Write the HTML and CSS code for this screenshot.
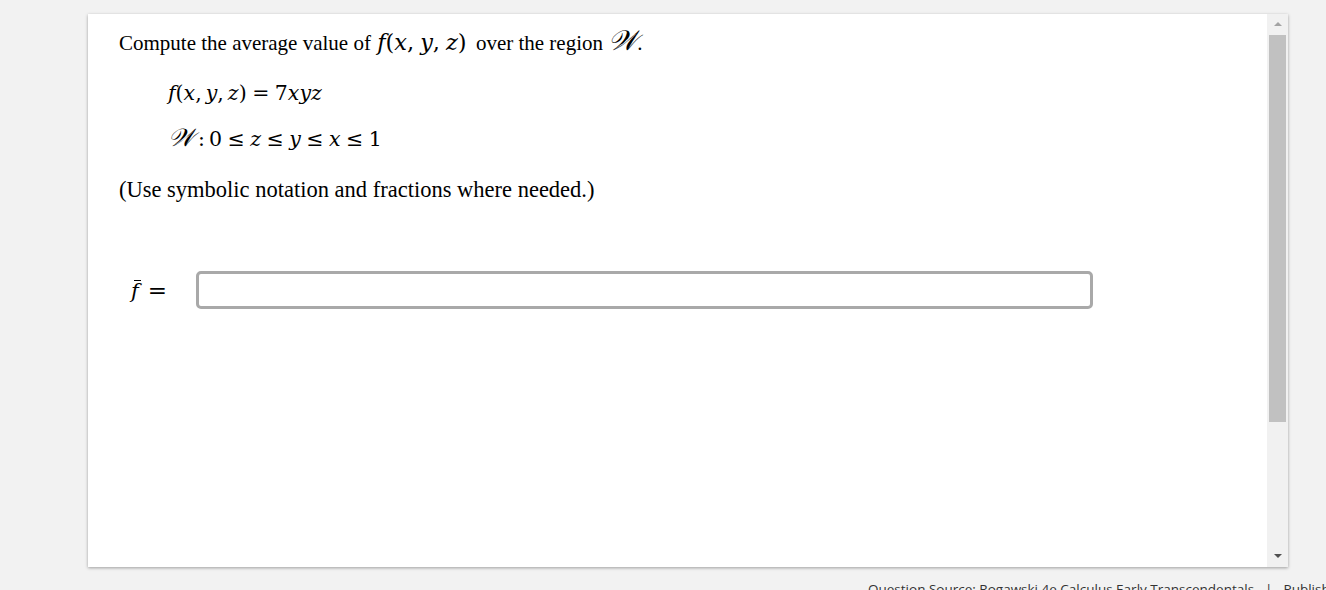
FILE: index.html
```html
<!DOCTYPE html>
<html>
<head>
<meta charset="utf-8">
<link rel="stylesheet" href="styles.css">
</head>
<body>
<div class="wrap">
  <div class="card">
    <div class="content">
      <p class="prompt">Compute the average value of <span class="m"><i>f</i>(<i>x</i>,<span class="sp"></span><i>y</i>,<span class="sp"></span><i>z</i>)</span> over the region <span class="m"><i class="cal">𝒲</i></span>.</p>
      <p class="eq"><span class="m"><i>f</i>(<i>x</i>,<span class="sp"></span><i>y</i>,<span class="sp"></span><i>z</i>)<span class="rel">=</span>7<i>xyz</i></span></p>
      <p class="eq"><span class="m"><i class="cal">𝒲</i><span class="colon">:</span>0<span class="rel">≤</span><i>z</i><span class="rel">≤</span><i>y</i><span class="rel">≤</span><i>x</i><span class="rel">≤</span>1</span></p>
      <p class="note">(Use symbolic notation and fractions where needed.)</p>
      <div class="answer">
        <span class="label m"><i class="fbar">f</i><span class="rel">=</span></span>
        <input class="field" type="text">
      </div>
    </div>
    <div class="scrollbar">
      <div class="arrow up"></div>
      <div class="track"><div class="thumb"></div></div>
      <div class="arrow down"></div>
    </div>
  </div>
  <div class="footer">Question Source: Rogawski 4e Calculus Early Transcendentals<span class="sep">|</span>Publisher: W.H. Freeman</div>
</div>
</body>
</html>
```
FILE: styles.css
```css
html, body {
  margin: 0;
  padding: 0;
  background: #f2f2f2;
  height: 590px;
  overflow: hidden;
}
.wrap {
  padding: 14px 0 0 88px;
}
.card {
  width: 1200px;
  height: 553px;
  background: #fff;
  box-shadow: 0 1px 3px rgba(0,0,0,0.35);
  display: flex;
}
.content {
  flex: 1;
  padding: 15px 0 0 31px;
  font-family: "Liberation Serif", "Times New Roman", serif;
  font-size: 21px;
  color: #000;
}
.content p {
  margin: 0;
  white-space: nowrap;
  line-height: 24px;
}
.m {
  font-family: "DejaVu Serif", serif;
  font-size: 20.5px;
  line-height: 24px;
}
.m i {
  font-style: italic;
}
.cal {
  font-style: normal;
  font-size: 25px;
}
.sp {
  display: inline-block;
  width: 4px;
}
.prompt .m {
  font-size: 22.5px;
}
.prompt .m .sp {
  width: 6px;
}
.prompt .m:first-child {
  padding: 0 4px 0 1px;
}
.prompt .cal {
  font-size: 28px;
}
.eq {
  padding-left: 49px;
}
.prompt + .eq {
  margin-top: 26px !important;
}
.eq + .eq {
  margin-top: 21px !important;
}
.note {
  margin-top: 27px !important;
  font-size: 22.5px;
}
.rel {
  padding: 0 5.5px;
  font-style: normal;
}
.colon {
  padding: 0 4px;
}
.answer {
  margin-top: 69px;
  display: flex;
  align-items: center;
}
.label {
  width: 77px;
  padding-left: 12px;
  box-sizing: border-box;
  white-space: nowrap;
  font-size: 21px;
}
.label .rel {
  padding-left: 9px;
  font-size: 23px;
}
.fbar {
  position: relative;
  display: inline-block;
}
.fbar::before {
  content: "";
  position: absolute;
  left: 3px;
  top: 1px;
  width: 7px;
  height: 1px;
  background: #000;
}
.field {
  width: 897px;
  height: 38px;
  box-sizing: border-box;
  border: 3px solid #a9a9a9;
  border-radius: 5px;
  background: #fff;
  outline: none;
  margin: 0;
}
.scrollbar {
  width: 21px;
  background: #f1f1f1;
  display: flex;
  flex-direction: column;
  align-items: center;
}
.arrow {
  width: 0;
  height: 0;
  border-left: 4px solid transparent;
  border-right: 4px solid transparent;
}
.arrow.up {
  margin-top: 8px;
  border-bottom: 4px solid #a3a3a3;
}
.arrow.down {
  margin-bottom: 9px;
  border-top: 4px solid #505050;
}
.track {
  flex: 1;
  width: 100%;
  padding-top: 9px;
  display: flex;
  justify-content: center;
}
.thumb {
  width: 17px;
  height: 387px;
  background: #c1c1c1;
}
.footer {
  margin-top: 13px;
  padding-left: 780px;
  white-space: nowrap;
  font-family: "Open Sans", "Noto Sans", sans-serif;
  font-size: 13.5px;
  color: #333;
}
.sep {
  padding: 0 11px;
}
```
